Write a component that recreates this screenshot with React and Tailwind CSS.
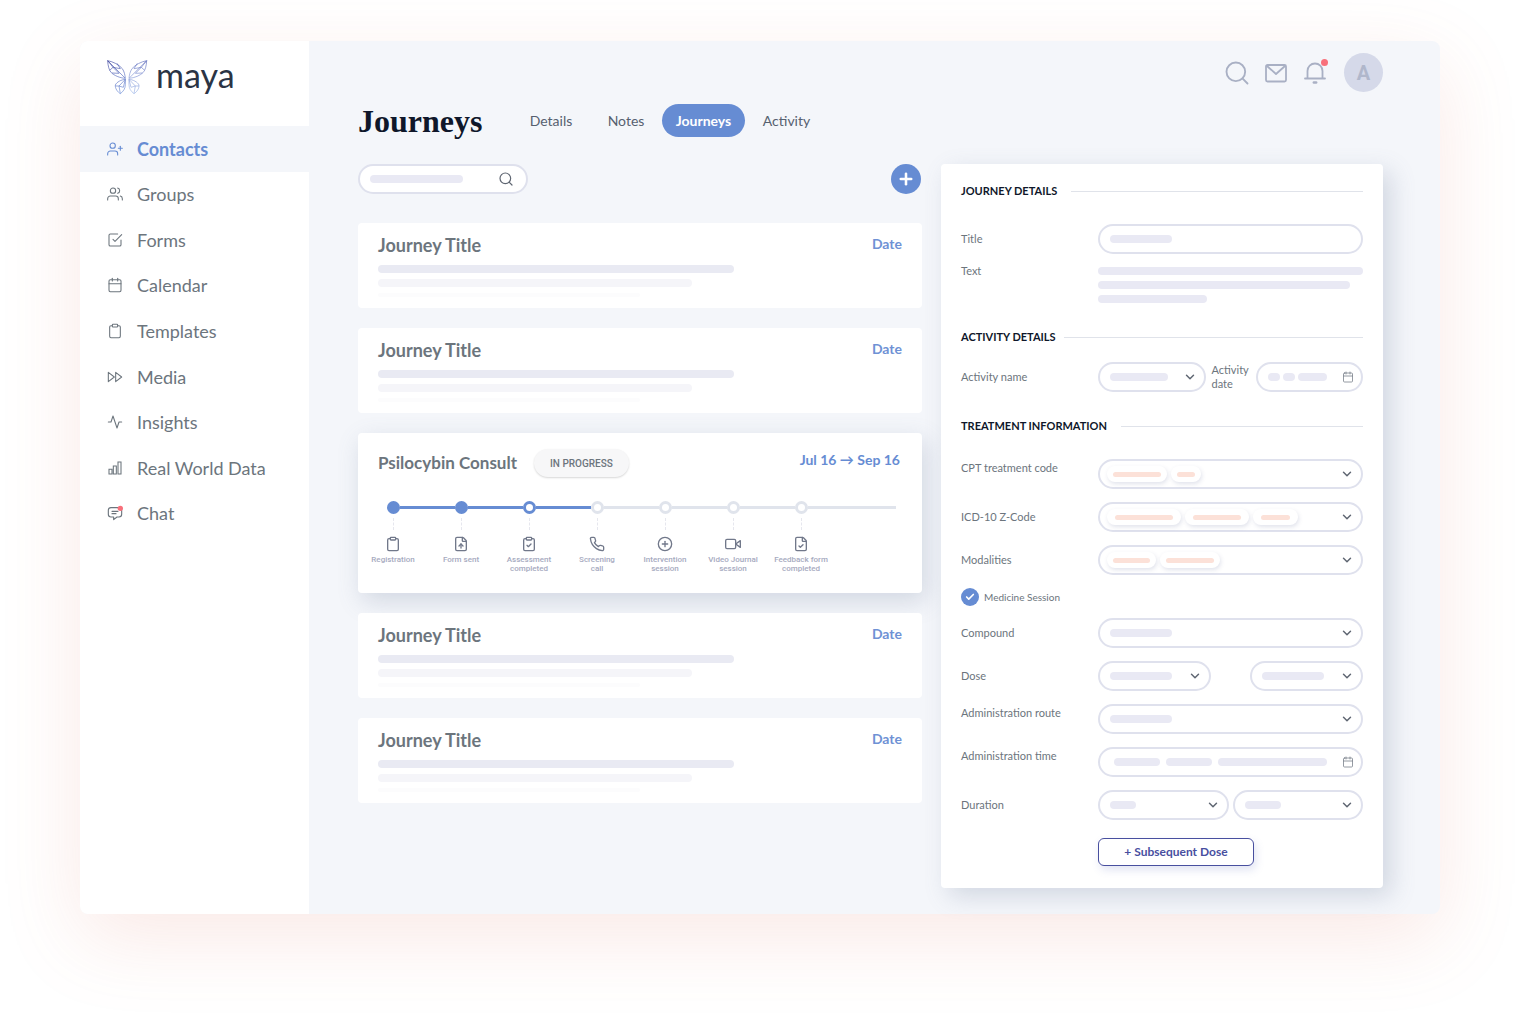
import React from "react";
import {
  FiUserPlus, FiUsers, FiCheckSquare, FiCalendar, FiClipboard, FiFastForward, FiActivity,
  FiSearch, FiPhone, FiPlusCircle, FiVideo, FiPlus, FiCheck, FiChevronDown,
} from "react-icons/fi";
import { ClipboardCheck, FileUp, FileCheck } from "lucide-react";

function Butterfly() {
  const wing = (
    <>
      <path d="M84 62 C100 65 118 74 128 86 C134 95 136 105 137 115 C120 114 103 106 95 98 C88 91 85 78 84 62Z" />
      <path d="M84 62 L137 115 M84 62 L100 82 L90 91 M100 82 L122 86 L112 70 M100 82 L118 100 L97 99" />
      <path d="M137 118 C125 119 111 126 107 135 C106 146 114 156 122 161 C131 154 137 146 137 134Z" />
      <path d="M137 118 L118 138 L107 138 M118 138 L122 161 M118 138 L131 142 L137 118" />
    </>
  );
  return (
    <svg viewBox="79 57 126 108" className="h-9 w-[42px]" fill="none" strokeWidth="2" strokeLinejoin="round" aria-hidden="true">
      <defs>
        <linearGradient id="wingLeft" gradientUnits="userSpaceOnUse" x1="84" y1="62" x2="137" y2="150">
          <stop stopColor="#4148a0" />
          <stop offset="1" stopColor="#6f8fd8" />
        </linearGradient>
        <linearGradient id="wingRight" gradientUnits="userSpaceOnUse" x1="84" y1="62" x2="125" y2="160">
          <stop stopColor="#5f6cbc" />
          <stop offset="1" stopColor="#a3bbea" />
        </linearGradient>
      </defs>
      <g stroke="url(#wingLeft)">{wing}</g>
      <g stroke="url(#wingRight)" transform="translate(285 0) scale(-1 1)">{wing}</g>
    </svg>
  );
}

function BarsIcon() {
  return (
    <svg viewBox="0 0 24 24" className="size-4" fill="none" stroke="currentColor" strokeWidth="1.6" aria-hidden="true">
      <path d="M3 14h4.500v7H3zM9.500 9H14v12H9.500zM16.500 3H21v18h-4.500z" />
    </svg>
  );
}

function ChatIcon() {
  return (
    <svg viewBox="0 0 24 24" className="size-4" fill="none" stroke="currentColor" strokeWidth="1.7" strokeLinecap="round" strokeLinejoin="round" aria-hidden="true">
      <path d="M6 4h12a4 4 0 0 1 4 4v6a4 4 0 0 1-4 4h-3l-5 4v-4H6a4 4 0 0 1-4-4V8a4 4 0 0 1 4-4Z" />
      <path d="M7.500 9.500h9M7.500 13h6" />
      <circle cx="20" cy="5" r="4" fill="#f8707b" stroke="none" />
    </svg>
  );
}

function MailIcon() {
  return (
    <svg viewBox="0 0 24 24" className="size-6" fill="none" stroke="currentColor" strokeWidth="1.8" strokeLinecap="round" strokeLinejoin="round" aria-hidden="true">
      <rect x="2" y="4" width="20" height="16.500" rx="1.500" />
      <path d="m3 5 9 8 9-8" />
    </svg>
  );
}

function BellIcon() {
  return (
    <svg viewBox="0 0 24 24" className="size-6" fill="none" stroke="currentColor" strokeWidth="1.8" strokeLinecap="round" strokeLinejoin="round" aria-hidden="true">
      <path d="M2 17.500h20M4.500 17.500V10a7.500 7.500 0 0 1 15 0v7.500" />
      <path d="M10.800 21.500h2.400" strokeWidth="2.400" />
    </svg>
  );
}

const navItems = [
  ["Contacts", FiUserPlus],
  ["Groups", FiUsers],
  ["Forms", FiCheckSquare],
  ["Calendar", FiCalendar],
  ["Templates", FiClipboard],
  ["Media", FiFastForward],
  ["Insights", FiActivity],
  ["Real World Data", BarsIcon],
  ["Chat", ChatIcon],
];

function Sidebar() {
  return (
    <aside className="w-[229px] shrink-0 rounded-l-lg bg-white">
      <div className="flex h-[85px] items-start gap-2 pt-[18px] pl-[26px]">
        <Butterfly />
        <span className="text-[34px] leading-8 text-[#2b3445]">maya</span>
      </div>
      <nav className="grid h-[410px] auto-rows-fr">
        {navItems.map(([name, Icon], i) => (
          <a
            key={name}
            href="#"
            className={
              i === 0
                ? "flex items-center gap-[14px] bg-[#f4f6fa] pl-[27px] text-lg font-bold text-[#668cd3]"
                : "flex items-center gap-[14px] pl-[27px] text-lg text-[#6c757d]"
            }
          >
            <Icon className="size-4" strokeWidth={1.6} />
            {name}
          </a>
        ))}
      </nav>
    </aside>
  );
}

function JourneyCard() {
  return (
    <article className="h-[85px] rounded bg-white px-5 pt-3">
      <div className="flex items-start justify-between">
        <h2 className="text-lg leading-5 font-bold text-[#6c757d]">Journey Title</h2>
        <span className="text-sm leading-[18px] font-bold text-[#6f92d5]">Date</span>
      </div>
      <div className="mt-[10px] flex flex-col gap-[6px]">
        <div className="h-2 w-[68%] rounded-full bg-[#e9eaf3]" />
        <div className="h-2 w-[60%] rounded-full bg-[#f5f5f9]" />
        <div className="h-1 w-[50%] rounded-full bg-[#fcfcfd]" />
      </div>
    </article>
  );
}

const steps = [
  ["Registration", FiClipboard, "done"],
  ["Form sent", FileUp, "done"],
  ["Assessment\ncompleted", ClipboardCheck, "current"],
  ["Screening\ncall", FiPhone, "next"],
  ["Intervention\nsession", FiPlusCircle, "todo"],
  ["Video Journal\nsession", FiVideo, "todo"],
  ["Feedback form\ncompleted", FileCheck, "todo"],
];

const nodeStyle = {
  done: "border-[#668cd3] bg-[#668cd3]",
  current: "border-[#668cd3] bg-white",
  next: "border-[#e0e4ec] bg-white",
  todo: "border-[#e0e4ec] bg-white",
};

function ActiveCard() {
  return (
    <article className="h-40 rounded bg-white pt-4 shadow-[4px_8px_24px_rgba(100,115,150,0.24)]">
      <div className="flex items-start justify-between pr-[22px] pl-5">
        <div className="flex items-center gap-[17px]">
          <h2 className="text-[17px] leading-7 font-bold text-[#6c757d]">Psilocybin Consult</h2>
          <span className="flex h-7 items-center rounded-full bg-[#f7f7f8] px-4 font-[Roboto,sans-serif] text-[10px] font-medium text-[#6c757d] shadow-[0_1px_2px_rgba(0,0,0,0.16)]">
            IN PROGRESS
          </span>
        </div>
        <span className="text-sm leading-[22px] font-bold text-[#668cd3]">Jul 16 → Sep 16</span>
      </div>
      <ol className="mt-6 flex pr-[26px] pl-px">
        {steps.map(([label, Icon, state], i) => (
          <li key={label} className="flex flex-[68] flex-col items-center">
            <div className="flex w-full items-center">
              <span
                className={
                  i === 0 ? "h-[3px] flex-1" : i <= 3 ? "h-[3px] flex-1 bg-[#668cd3]" : "h-[3px] flex-1 bg-[#e0e4ec]"
                }
              />
              <span className={`size-[13px] rounded-full border-3 ${nodeStyle[state]}`} />
              <span className={i < 3 ? "h-[3px] flex-1 bg-[#668cd3]" : "h-[3px] flex-1 bg-[#e0e4ec]"} />
            </div>
            <span className="mt-1 h-3 border-l border-dashed border-[#e6e7ee]" />
            <Icon className="mt-[6px] size-4 text-[#71788a]" strokeWidth={2} />
            <span className="mt-[3px] text-center font-[Roboto,sans-serif] text-[8px] leading-[9px] font-medium whitespace-pre text-[#a6aac0]">
              {label}
            </span>
          </li>
        ))}
        <li aria-hidden="true" className="mt-[5px] h-[3px] flex-[61] bg-[#e0e4ec]" />
      </ol>
    </article>
  );
}

function SectionHeading({ children, gap }) {
  return (
    <div className={`flex h-5 items-center ${gap}`}>
      <h3 className="text-[11px] font-bold whitespace-nowrap text-[#0f172a]">{children}</h3>
      <span className="h-px flex-1 bg-[#e0e3ea]" />
    </div>
  );
}

const box = "block h-[30px] w-full appearance-none rounded-full border-2 border-[#dfe1ed] bg-white";

function Bars({ widths }) {
  return widths.map((w, i) => <span key={i} className={`h-2 rounded-full bg-[#e9e9f4] ${w}`} />);
}

function Field({ id, label, type = "select", widths = [], tags, gap = "gap-1", tagPad = "px-[6px]" }) {
  return (
    <div className="relative min-w-0 flex-1">
      {type === "select" ? (
        <select id={id} aria-label={label} className={box}>
          <option value="" />
        </select>
      ) : (
        <input id={id} aria-label={label} type="text" className={box} />
      )}
      <span className={`pointer-events-none absolute inset-0 flex items-center pr-[9px] ${tags ? "gap-1 pl-[9px]" : `pl-3 ${gap}`}`}>
        {tags ? (
          tags.map((w, i) => (
            <span key={i} className={`flex h-4 items-center rounded-full bg-white shadow-[1px_2px_4px_rgba(90,100,150,0.18)] ${tagPad}`}>
              <span className={`h-[5px] rounded-full bg-[#fce1d8] ${w}`} />
            </span>
          ))
        ) : (
          <Bars widths={widths} />
        )}
        {type === "select" && <FiChevronDown className="ml-auto size-[14px] text-[#5f6672]" strokeWidth={2.5} />}
        {type === "date" && <FiCalendar className="ml-auto size-3 text-[#7a818c]" strokeWidth={1.6} />}
      </span>
    </div>
  );
}

function Row({ id, label, raised, children }) {
  return (
    <div className={raised ? "flex items-start" : "flex items-center"}>
      <label htmlFor={id} className="w-[137px] shrink-0 text-[11px] leading-[18px] text-[#6c757d]">
        {label}
      </label>
      <div className="flex min-w-0 flex-1">{children}</div>
    </div>
  );
}

function DetailsPanel() {
  return (
    <form className="rounded bg-white px-5 pt-[17px] pb-[22px] shadow-[8px_8px_24px_rgba(100,115,150,0.24)]">
      <SectionHeading gap="gap-[14px]">JOURNEY DETAILS</SectionHeading>
      <div className="mt-[23px] flex flex-col gap-[13px]">
        <Row id="title" label="Title">
          <Field id="title" type="text" label="Title" widths={["w-[62px]"]} />
        </Row>
        <div className="flex items-start">
          <span className="flex h-2 w-[137px] shrink-0 items-center text-[11px] text-[#6c757d]">Text</span>
          <div className="flex flex-1 flex-col gap-[6px]">
            <Bars widths={["w-full", "w-[95%]", "w-[41%]"]} />
          </div>
        </div>
      </div>

      <div className="mt-6">
        <SectionHeading gap="gap-2">ACTIVITY DETAILS</SectionHeading>
      </div>
      <div className="mt-[15px]">
        <Row id="activity" label="Activity name">
          <Field id="activity" label="Activity name" widths={["w-[58px]"]} />
          <label htmlFor="activity-date" className="w-[50px] shrink-0 self-center pl-[6px] text-[11px] leading-[14px] text-[#6c757d]">
            Activity date
          </label>
          <Field id="activity-date" type="date" label="Activity date" gap="gap-[3px]" widths={["w-3", "w-3", "w-[29px]"]} />
        </Row>
      </div>

      <div className="mt-6">
        <SectionHeading gap="gap-[14px]">TREATMENT INFORMATION</SectionHeading>
      </div>
      <div className="mt-[23px] flex flex-col gap-[13px]">
        <Row id="cpt" label="CPT treatment code" raised>
          <Field id="cpt" label="CPT treatment code" tags={["w-12", "w-[18px]"]} />
        </Row>
        <Row id="icd" label="ICD-10 Z-Code">
          <Field id="icd" label="ICD-10 Z-Code" tagPad="px-2" tags={["w-[58px]", "w-12", "w-[29px]"]} />
        </Row>
        <Row id="modalities" label="Modalities">
          <Field id="modalities" label="Modalities" tags={["w-[37px]", "w-12"]} />
        </Row>
      </div>

      <label className="mt-[13px] flex h-[18px] items-center gap-[5px] text-[10px] text-[#6c757d]">
        <span className="relative size-[18px]">
          <input type="checkbox" defaultChecked className="block size-[18px] appearance-none rounded-full bg-[#668cd3]" />
          <FiCheck className="pointer-events-none absolute inset-1 size-[10px] text-white" strokeWidth={4} />
        </span>
        Medicine Session
      </label>

      <div className="mt-3 flex flex-col gap-[13px]">
        <Row id="compound" label="Compound">
          <Field id="compound" label="Compound" widths={["w-[62px]"]} />
        </Row>
        <Row id="dose" label="Dose">
          <div className="flex flex-1 gap-[39px]">
            <Field id="dose" label="Dose" widths={["w-[62px]"]} />
            <Field id="dose-unit" label="Dose unit" widths={["w-[62px]"]} />
          </div>
        </Row>
        <Row id="route" label="Administration route" raised>
          <Field id="route" label="Administration route" widths={["w-[62px]"]} />
        </Row>
        <Row id="time" label="Administration time" raised>
          <Field id="time" type="date" label="Administration time" gap="gap-[6px]" widths={["w-[46px] ml-1", "w-[46px]", "w-[109px]"]} />
        </Row>
        <Row id="duration" label="Duration">
          <div className="flex flex-1 gap-1">
            <Field id="duration" label="Duration" widths={["w-[26px]"]} />
            <Field id="duration-unit" label="Duration unit" widths={["w-9"]} />
          </div>
        </Row>
      </div>
      <button
        type="button"
        className="mt-[18px] ml-[137px] block h-7 w-[156px] rounded-md border border-[#484f9f] bg-white text-xs font-bold text-[#484f9f] shadow-[2px_4px_8px_rgba(90,105,190,0.18)]"
      >
        + Subsequent Dose
      </button>
    </form>
  );
}

const tabs = [
  ["Details", "w-[84px]"],
  ["Notes", "w-[66px]"],
  ["Journeys", "w-[83px]"],
  ["Activity", "w-[83px]"],
];

export default function App() {
  return (
    <div className="min-h-screen bg-white px-20 pt-[41px] pb-[120px] font-[Lato,sans-serif]">
      <div className="flex rounded-lg bg-[#f4f6fa] shadow-[0_24px_80px_rgba(220,110,90,0.15)]">
        <Sidebar />
        <main className="min-w-0 flex-1 pt-3 pr-[57px] pb-[26px] pl-[49px]">
          <header className="flex items-center justify-end gap-[15px] text-[#a9b0c4]">
            <button type="button" aria-label="Search" className="-mr-[2px]">
              <FiSearch className="size-7" strokeWidth={1.6} />
            </button>
            <button type="button" aria-label="Messages">
              <MailIcon />
            </button>
            <button type="button" aria-label="Notifications" className="relative">
              <BellIcon />
              <span className="absolute -top-[2px] -right-[1px] size-[7px] rounded-full bg-[#f8707b]" />
            </button>
            <button
              type="button"
              aria-label="Account"
              className="ml-[2px] size-[39px] rounded-full bg-[#d5d9e9] font-[Roboto,sans-serif] text-xl font-bold text-[#b0b7cb]"
            >
              A
            </button>
          </header>
          <div className="mt-3 flex h-[33px] items-center">
            <h1 className="w-[151px] shrink-0 font-['Liberation_Serif',serif] text-[32px] leading-8 font-bold text-[#0f172a]">
              Journeys
            </h1>
            <div role="tablist" className="flex">
              {tabs.map(([name, width]) => (
                <button
                  key={name}
                  type="button"
                  role="tab"
                  aria-selected={name === "Journeys"}
                  className={`h-[33px] rounded-full text-sm ${width} ${
                    name === "Journeys" ? "ml-[3px] bg-[#668cd3] font-bold text-white" : "text-[#56606f]"
                  }`}
                >
                  {name}
                </button>
              ))}
            </div>
          </div>
          <div className="mt-[27px] grid grid-cols-[564fr_442fr] gap-[19px]">
            <section className="min-w-0">
              <div className="flex items-center justify-between pr-px">
                <div className="relative w-[170px]">
                  <input type="search" aria-label="Search journeys" className={box} />
                  <span className="pointer-events-none absolute inset-0 flex items-center justify-between pr-[14px] pl-3">
                    <span className="h-2 w-[93px] rounded-full bg-[#e9e9f4]" />
                    <FiSearch className="size-4 text-[#5f6672]" strokeWidth={1.8} />
                  </span>
                </div>
                <button
                  type="button"
                  aria-label="Add journey"
                  className="flex size-[30px] items-center justify-center rounded-full bg-[#668cd3] text-white"
                >
                  <FiPlus className="size-[18px]" strokeWidth={3.4} />
                </button>
              </div>
              <div className="mt-[29px] flex flex-col gap-5">
                <JourneyCard />
                <JourneyCard />
                <ActiveCard />
                <JourneyCard />
                <JourneyCard />
              </div>
            </section>
            <DetailsPanel />
          </div>
        </main>
      </div>
    </div>
  );
}
